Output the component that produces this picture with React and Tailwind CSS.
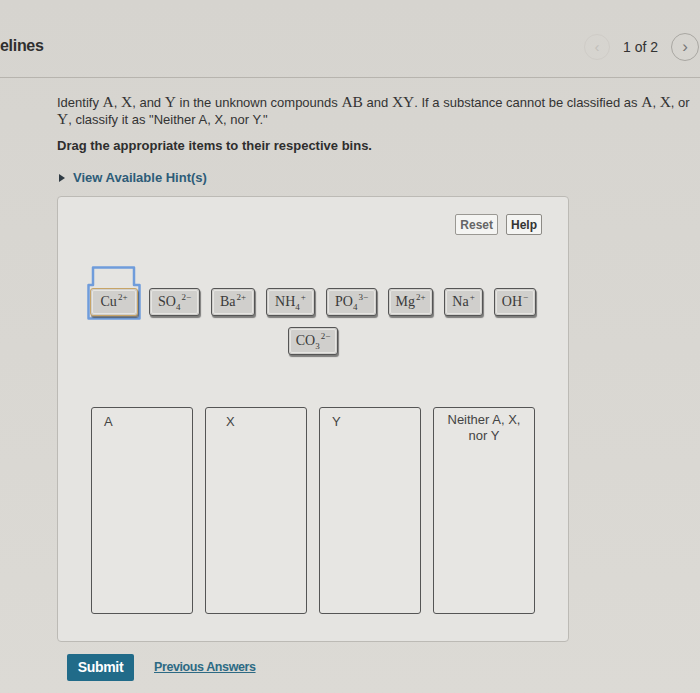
import React from 'react';

const ions = [
  { base: 'Cu', sup: '2+', w: 'w-[48px]', active: true },
  { base: 'SO', sub: '4', sup: '2−', w: 'w-[51px]' },
  { base: 'Ba', sup: '2+', w: 'w-[44px]' },
  { base: 'NH', sub: '4', sup: '+', w: 'w-[49px]' },
  { base: 'PO', sub: '4', sup: '3−', w: 'w-[51px]' },
  { base: 'Mg', sup: '2+', w: 'w-[45px]' },
  { base: 'Na', sup: '+', w: 'w-[39px]' },
  { base: 'OH', sup: '−', w: 'w-[42px]' },
];

function Ion({ ion }) {
  return (
    <span className="flex items-start font-['Liberation_Serif',serif] text-[14px] text-[#3a3a3a] leading-[16px]">
      <span>{ion.base}</span>
      {ion.sub && <span className="text-[9px] leading-none relative top-[9px]">{ion.sub}</span>}
      {ion.sup && <span className="text-[9px] leading-none relative top-[-1px] ml-[1px]">{ion.sup}</span>}
    </span>
  );
}

function Tile({ ion }) {
  return (
    <div className={`relative ${ion.w} h-[28px]`}>
      {ion.active && (
        <svg className="absolute left-[-3px] top-[-22px]" width="54" height="54" viewBox="0 0 54 54">
          <path d="M6 19 V1.5 H47 V19 H52.5 V52.5 H1.5 V19 Z" fill="none" stroke="#6f9cdb" strokeWidth="2.5" strokeLinejoin="round" />
        </svg>
      )}
      <div
        className={`relative h-full w-full rounded-[3px] border-[1.5px] bg-[#d0cfcc] flex items-center justify-center shadow-[1px_2px_1px_rgba(40,40,40,0.55)] ${
          ion.active ? 'border-[#c7a467]' : 'border-[#555]'
        }`}
      >
        <div className="absolute inset-[1px] rounded-[2px] border border-[#e6e5e2]" />
        <Ion ion={ion} />
      </div>
    </div>
  );
}

function Bin({ children }) {
  return (
    <div className="w-[102px] h-[207px] rounded-[3px] border-[1.5px] border-[#555] bg-[#e7e6e3] text-[13px] text-[#444]">
      {children}
    </div>
  );
}

const M = ({ children }) => (
  <span className="font-['Liberation_Serif',serif] text-[15.5px] leading-none text-[#333]">{children}</span>
);

export default function App() {
  return (
    <div className="w-[700px] h-[693px] overflow-hidden bg-gradient-to-b from-[#d6d4cf] to-[#dcdad5] font-['Liberation_Sans',Arial,sans-serif] text-[#333]">
      {/* header */}
      <div className="h-[78px] border-b border-[#b7b4ae] flex items-start justify-between pt-[33px]">
        <div className="h-[26px] flex items-center text-[16px] font-bold text-[#2f2f2f] tracking-[-0.3px]">elines</div>
        <div className="flex items-center">
          <div className="w-[26px] h-[26px] rounded-full border border-[#cfccc7] flex items-center justify-center text-[#c2c0bb] text-[15px]">
            ‹
          </div>
          <div className="ml-[13px] mr-[13px] text-[14px] text-[#333]">1 of 2</div>
          <div className="w-[28px] h-[28px] rounded-full border border-[#a9a7a2] flex items-center justify-center text-[#777] text-[17px] mr-[1px]">
            ›
          </div>
        </div>
      </div>

      {/* body */}
      <div className="pl-[57px] pr-[3px]">
        <p className="mt-[16px] text-[13px] leading-[17px] text-[#333]">
          Identify <M>A</M>, <M>X</M>, and <M>Y</M> in the unknown compounds <M>AB</M> and <M>XY</M>. If a substance cannot be classified as <M>A</M>, <M>X</M>, or <M>Y</M>, classify it as "Neither A, X, nor Y."
        </p>
        <p className="mt-[9px] text-[13px] leading-[17px] font-bold text-[#2e2e2e]">Drag the appropriate items to their respective bins.</p>
        <div className="mt-[15px] flex items-center gap-[8px] text-[13px] leading-[17px] font-bold text-[#2d5c78]">
          <span className="ml-[2px] w-0 h-0 border-y-[4.5px] border-y-transparent border-l-[6px] border-l-[#2f3b44]" />
          View Available Hint(s)
        </div>

        {/* panel */}
        <div className="mt-[10px] w-[512px] h-[446px] rounded-[4px] border border-[#bcbab5] bg-[#e5e4e1] flex flex-col">
          <div className="flex justify-end gap-[8px] pt-[17px] pr-[26px]">
            <button className="h-[21px] px-[4px] rounded-[2px] border border-[#9a9893] bg-[#f4f4f2] text-[12px] font-bold text-[#666]">Reset</button>
            <button className="h-[21px] px-[4px] rounded-[2px] border border-[#8d8b86] bg-[#f4f4f2] text-[12px] font-bold text-[#333]">Help</button>
          </div>

          <div className="mt-[53px] flex flex-wrap justify-center gap-x-[11px] gap-y-[11px] px-[28px]">
            {ions.map((ion) => (
              <Tile key={ion.base + (ion.sub || '')} ion={ion} />
            ))}
            <Tile ion={{ base: 'CO', sub: '3', sup: '2−', w: 'w-[50px]' }} />
          </div>

          <div className="mt-[52px] flex justify-center gap-[12px]">
            <Bin><div className="pl-[12px] pt-[4px]">A</div></Bin>
            <Bin><div className="pl-[20px] pt-[4px]">X</div></Bin>
            <Bin><div className="pl-[12px] pt-[4px]">Y</div></Bin>
            <Bin><div className="pt-[4px] text-center leading-[16px]">Neither A, X,<br />nor Y</div></Bin>
          </div>
        </div>

        {/* actions */}
        <div className="mt-[12px] flex items-center">
          <button className="ml-[10px] w-[67px] h-[27px] rounded-[2px] bg-[#216b89] text-white text-[14px] font-bold tracking-[-0.3px]">Submit</button>
          <a className="ml-[20px] text-[12.5px] font-bold text-[#2d6a84] underline tracking-[-0.4px]">Previous Answers</a>
        </div>
      </div>
    </div>
  );
}
